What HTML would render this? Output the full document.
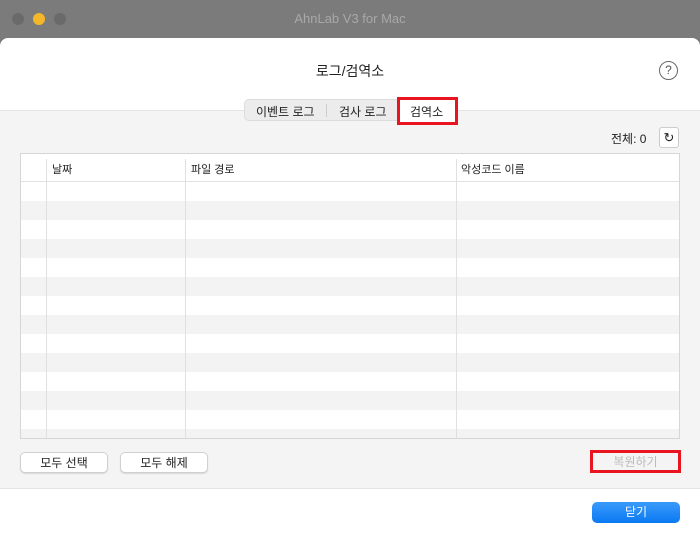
<!DOCTYPE html>
<html><head><meta charset="utf-8"><style>
*{margin:0;padding:0;box-sizing:border-box}
body{width:700px;height:539px;background:#7a7a7a;font-family:"Liberation Sans","Noto Sans CJK KR",sans-serif;position:relative;overflow:hidden;font-size:12px;color:#222}
.a{position:absolute}
.tb{left:0;top:0;width:700px;height:38px;background:#7b7b7b}
.dot{width:12px;height:12px;border-radius:50%;top:13px}
.sheet{left:0;top:38px;width:700px;height:501px;background:#fff;border-radius:8px 8px 0 0}
.gray{left:0;top:110px;width:700px;height:379px;background:#f4f4f4;border-top:1px solid #e4e4e4;border-bottom:1px solid #e4e4e4}
.btn{background:#fff;border:1px solid #d0d0d0;border-radius:5px;box-shadow:0 1px 1px rgba(0,0,0,.12);text-align:center;font-size:12px;line-height:20px}
</style></head><body>
<div class="a tb"></div>
<div class="a dot" style="left:12px;background:#6a6a6a"></div>
<div class="a dot" style="left:33px;background:#f5b72a"></div>
<div class="a dot" style="left:54px;background:#6a6a6a"></div>
<div class="a" style="left:0;width:700px;top:11px;text-align:center;color:#a8a8a8;font-size:13px">AhnLab V3 for Mac</div>
<div class="a sheet"></div>
<div class="a" style="left:0;width:700px;top:61px;text-align:center;font-size:14px;color:#222">로그/검역소</div>
<div class="a" style="left:659px;top:61px;width:19px;height:19px;border:1px solid #666;border-radius:50%;text-align:center;font-size:12px;line-height:17px;color:#555">?</div>
<div class="a gray"></div>
<div class="a" style="left:244px;top:99px;width:214px;height:22px;background:#ececec;border:1px solid #dcdcdc;border-radius:5px"></div>
<div class="a" style="left:256px;top:103px;font-size:12px">이벤트 로그</div>
<div class="a" style="left:326px;top:104px;width:1px;height:13px;background:#ccc"></div>
<div class="a" style="left:339px;top:103px;font-size:12px">검사 로그</div>
<div class="a" style="left:400px;top:99px;width:55px;height:24px;background:#fff"></div>
<div class="a" style="left:410px;top:103px;font-size:12px">검역소</div>
<div class="a" style="left:397px;top:97px;width:61px;height:28px;border:3px solid #e8141f"></div>
<div class="a" style="left:611px;top:130px;font-size:12px">전체: 0</div>
<div class="a" style="left:659px;top:127px;width:20px;height:21px;background:#fff;border:1px solid #ccc;border-radius:3px;text-align:center;font-size:13px;line-height:19px">↻</div>
<div class="a" style="left:20px;top:153px;width:660px;height:286px;border:1px solid #d6d6d6;background:#fff">
<div class="a" style="left:0;top:0;width:658px;height:28px;background:#fff;border-bottom:1px solid #e2e2e2"></div>
</div>
<div class="a" style="left:21px;top:182px;width:658px;height:256px;background:repeating-linear-gradient(#fff 0 19px,#f3f3f3 19px 38px)"></div>
<div class="a" style="left:46px;top:159px;width:1px;height:279px;background:#e0e0e0"></div>
<div class="a" style="left:185px;top:159px;width:1px;height:279px;background:#e0e0e0"></div>
<div class="a" style="left:456px;top:159px;width:1px;height:279px;background:#e0e0e0"></div>
<div class="a" style="left:52px;top:161px;font-size:11px">날짜</div>
<div class="a" style="left:191px;top:161px;font-size:11px">파일 경로</div>
<div class="a" style="left:461px;top:161px;font-size:11px">악성코드 이름</div>
<div class="a btn" style="left:20px;top:452px;width:88px;height:21px">모두 선택</div>
<div class="a btn" style="left:120px;top:452px;width:88px;height:21px">모두 해제</div>
<div class="a" style="left:590px;top:450px;width:91px;height:23px;border:3px solid #e8141f;text-align:center;color:#bbb;font-size:12px;line-height:19px">복원하기</div>
<div class="a" style="left:592px;top:502px;width:88px;height:21px;background:linear-gradient(#3b9bfb,#0a79f2);border-radius:5px;color:#fff;text-align:center;font-size:12px;line-height:21px">닫기</div>
</body></html>
